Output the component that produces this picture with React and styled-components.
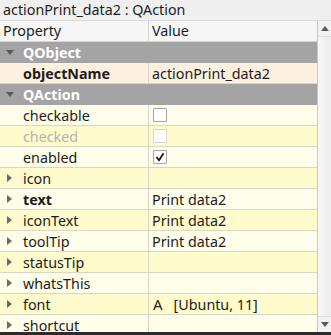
import React from "react";
import styled, { createGlobalStyle } from "styled-components";

const Global = createGlobalStyle`
  html, body { margin: 0; padding: 0; background: #efefef; }
  body { font-family: "Noto Sans", "Open Sans", "DejaVu Sans", sans-serif; font-size: 14.3px; color: #1c1c1c; }
`;

const Window = styled.div`
  width: 331px;
  height: 335px;
  display: flex;
  flex-direction: column;
  overflow: hidden;
  background: #efefef;
`;

const TitleBar = styled.div`
  height: 20px;
  line-height: 19px;
  padding-left: 3px;
  border-bottom: 1px solid #d9d9d9;
  background: #efefef;
  white-space: nowrap;
`;

const Panel = styled.div`
  flex: 1;
  display: flex;
  min-height: 0;
`;

const Tree = styled.div`
  width: 317px;
  display: flex;
  flex-direction: column;
  overflow: hidden;
  border-right: 1px solid #c8c8c8;
`;

const Header = styled.div`
  display: grid;
  grid-template-columns: 149px 1fr;
  height: 20px;
  flex: none;
  background: #f6f6f6;
  border-bottom: 1px solid #d4d4d4;
`;

const HeaderCell = styled.div`
  line-height: 20px;
  padding-left: 3px;
  border-right: ${(p) => (p.$first ? "1px solid #d4d4d4" : "none")};
`;

const Row = styled.div`
  display: grid;
  grid-template-columns: 149px 1fr;
  height: 21px;
  flex: none;
  background: ${(p) => p.$bg};
  box-sizing: border-box;
  border-bottom: ${(p) => (p.$group ? "none" : "1px solid #d8d6c4")};
`;

const NameCell = styled.div`
  display: flex;
  align-items: center;
  border-right: ${(p) => (p.$group ? "none" : "1px solid #d8d6c4")};
  font-weight: ${(p) => (p.$bold ? 700 : 400)};
  color: ${(p) => p.$color || "#1c1c1c"};
  white-space: nowrap;
  overflow: hidden;
`;

const Arrow = styled.span`
  width: 23px;
  flex: none;
  display: flex;
  align-items: center;
  justify-content: center;
  padding-right: 4px;
  box-sizing: border-box;
`;

const ValueCell = styled.div`
  display: flex;
  align-items: center;
  padding-left: 3px;
  white-space: nowrap;
`;

const Check = styled.span`
  width: 12px;
  height: 12px;
  margin-left: 1px;
  border: 1px solid ${(p) => (p.$disabled ? "#d4d4d4" : "#a8a8a8")};
  background: #fff;
  display: flex;
  align-items: center;
  justify-content: center;
  border-radius: 1px;
`;

const FontGlyph = styled.span`
  font-size: 15px;
  margin-right: 11px;
  margin-left: 1px;
`;

const Scroll = styled.div`
  width: 13px;
  display: flex;
  flex-direction: column;
  background: linear-gradient(to right, #f4f4f4, #e9e9e9);
`;

const ScrollBtn = styled.div`
  height: 15px;
  display: flex;
  align-items: center;
  justify-content: center;
  border-${(p) => (p.$up ? "bottom" : "top")}: 1px solid #dcdcdc;
  background: #f2f2f2;
`;

const Track = styled.div`
  flex: 1;
  background: linear-gradient(to right, #f7f7f7, #ececec);
`;

const BottomBar = styled.div`
  height: 3px;
  background: #2b2b2b;
  flex: none;
`;

const Down = () => (
  <svg width="8" height="5" viewBox="0 0 8 5">
    <path d="M0 0 L8 0 L4 5 Z" fill="#5a5a5a" />
  </svg>
);
const Right = () => (
  <svg width="5" height="8" viewBox="0 0 5 8">
    <path d="M0 0 L5 4 L0 8 Z" fill="#6a6a6a" />
  </svg>
);
const Tick = () => (
  <svg width="10" height="10" viewBox="0 0 10 10">
    <path d="M1.5 5 L4 8.2 L8.6 1.2" stroke="#111" strokeWidth="1.7" fill="none" />
  </svg>
);

const LIGHT = "#fffeea";
const DARK = "#fffbcc";

const rows = [
  { group: "QObject" },
  { name: "objectName", bold: true, value: "actionPrint_data2", bg: "#fdf0de" },
  { group: "QAction" },
  { name: "checkable", check: "off", bg: LIGHT },
  { name: "checked", check: "disabled", disabled: true, bg: DARK },
  { name: "enabled", check: "on", bg: LIGHT },
  { name: "icon", expand: true, bg: DARK },
  { name: "text", bold: true, expand: true, value: "Print data2", bg: LIGHT },
  { name: "iconText", expand: true, value: "Print data2", bg: DARK },
  { name: "toolTip", expand: true, value: "Print data2", bg: LIGHT },
  { name: "statusTip", expand: true, bg: DARK },
  { name: "whatsThis", expand: true, bg: LIGHT },
  { name: "font", expand: true, font: true, value: "[Ubuntu, 11]", bg: DARK },
  { name: "shortcut", expand: true, bg: LIGHT },
];

export default function App() {
  return (
    <>
      <Global />
      <Window>
        <TitleBar>actionPrint_data2 : QAction</TitleBar>
        <Panel>
          <Tree>
            <Header>
              <HeaderCell $first>Property</HeaderCell>
              <HeaderCell>Value</HeaderCell>
            </Header>
            {rows.map((r, i) =>
              r.group ? (
                <Row key={i} $bg="#a4a4a4" $group>
                  <NameCell $group $bold $color="#ffffff">
                    <Arrow><Down /></Arrow>
                    {r.group}
                  </NameCell>
                  <ValueCell />
                </Row>
              ) : (
                <Row key={i} $bg={r.bg}>
                  <NameCell $bold={r.bold} $color={r.disabled ? "#b4b4b4" : undefined}>
                    <Arrow>{r.expand ? <Right /> : null}</Arrow>
                    {r.name}
                  </NameCell>
                  <ValueCell>
                    {r.check ? (
                      <Check $disabled={r.check === "disabled"}>
                        {r.check === "on" ? <Tick /> : null}
                      </Check>
                    ) : null}
                    {r.font ? <FontGlyph>A</FontGlyph> : null}
                    {r.value}
                  </ValueCell>
                </Row>
              )
            )}
          </Tree>
          <Scroll>
            <ScrollBtn $up>
              <svg width="8" height="5" viewBox="0 0 8 5"><path d="M0 5 L8 5 L4 0 Z" fill="#5a5a5a" /></svg>
            </ScrollBtn>
            <Track />
            <ScrollBtn>
              <Down />
            </ScrollBtn>
          </Scroll>
        </Panel>
        <BottomBar />
      </Window>
    </>
  );
}
